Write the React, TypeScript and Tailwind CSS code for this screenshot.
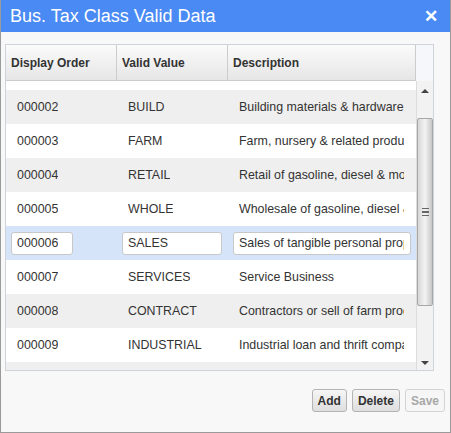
import React from "react";

type Row = { order: string; value: string; desc: string };

const rows: Row[] = [
  { order: "000001", value: "AGRI", desc: "Agriculture" },
  { order: "000002", value: "BUILD", desc: "Building materials & hardware" },
  { order: "000003", value: "FARM", desc: "Farm, nursery & related products" },
  { order: "000004", value: "RETAIL", desc: "Retail of gasoline, diesel & motor fuel" },
  { order: "000005", value: "WHOLE", desc: "Wholesale of gasoline, diesel & motor fuel" },
  { order: "000006", value: "SALES", desc: "Sales of tangible personal property" },
  { order: "000007", value: "SERVICES", desc: "Service Business" },
  { order: "000008", value: "CONTRACT", desc: "Contractors or sell of farm products" },
  { order: "000009", value: "INDUSTRIAL", desc: "Industrial loan and thrift companies" },
  { order: "000010", value: "OTHER", desc: "Other" },
];

const SELECTED = 5;

function Cell({ w, children }: { w: string; children: React.ReactNode }) {
  return (
    <div className={`${w} flex h-full shrink-0 items-center overflow-hidden whitespace-nowrap pl-[11px] pr-[12px]`}>
      <span className="overflow-hidden">{children}</span>
    </div>
  );
}

function InputCell({ w, iw, value }: { w: string; iw: string; value: string }) {
  return (
    <div className={`${w} flex h-full shrink-0 items-center pl-[5px]`}>
      <div
        className={`${iw} flex h-[23px] items-center overflow-hidden whitespace-nowrap rounded-[3px] border border-[#c8c8c8] bg-white pl-[5px] pr-[6px]`}
      >
        <span className="overflow-hidden">{value}</span>
      </div>
    </div>
  );
}

function Scrollbar() {
  return (
    <div className="flex w-[17px] shrink-0 flex-col border-l border-[#dcdcdc] bg-[#f2f2f2]">
      <div className="flex h-[37px] items-start justify-center pt-[8px]">
        <div className="h-0 w-0 border-x-[4px] border-b-[4px] border-x-transparent border-b-[#444]" />
      </div>
      <div className="flex h-[188px] flex-col items-center justify-center rounded-[2px] border border-[#a8a8a8] bg-gradient-to-r from-[#d6d6d6] via-[#f4f4f4] to-[#c8c8c8]">
        <div className="flex flex-col gap-[2px]">
          <div className="h-[1.5px] w-[7px] bg-[#666]" />
          <div className="h-[1.5px] w-[7px] bg-[#666]" />
          <div className="h-[1.5px] w-[7px] bg-[#666]" />
        </div>
      </div>
      <div className="flex flex-1 items-end justify-center pb-[5px]">
        <div className="h-0 w-0 border-x-[4px] border-t-[4px] border-x-transparent border-t-[#444]" />
      </div>
    </div>
  );
}

function Button({ label, disabled }: { label: string; disabled?: boolean }) {
  return (
    <button
      className={
        disabled
          ? "h-[23px] rounded-[3px] border border-[#d4d4d4] bg-[#f6f6f6] px-[5px] text-[12px] font-bold text-[#a8a8a8]"
          : "h-[23px] rounded-[3px] border border-[#b4b4b4] bg-gradient-to-b from-[#f6f6f6] to-[#dedede] px-[5px] text-[12px] font-bold text-[#333]"
      }
    >
      {label}
    </button>
  );
}

export default function App() {
  return (
    <div
      className="flex h-[433px] w-[451px] flex-col border-x border-b border-[#9a9a9a] bg-[#f8f8f8] text-[12px] text-[#333]"
      style={{ fontFamily: '"Liberation Sans", Arial, sans-serif' }}
    >
      <div className="flex h-[32px] shrink-0 items-center justify-between bg-[#4a8af4] pl-[9px] pr-[12px] text-white">
        <span className="text-[18px]">Bus. Tax Class Valid Data</span>
        <span className="text-[17px] font-bold leading-none">✕</span>
      </div>

      <div className="ml-[4px] mt-[12px] flex h-[327px] w-[429px] border border-[#cfd4da] bg-white">
        <div className="flex w-[410px] flex-col">
          <div className="flex h-[36px] shrink-0 border-b border-[#cccccc] bg-gradient-to-b from-[#fbfbfb] to-[#e6e6e6] font-bold">
            <div className="flex w-[111px] items-center border-r border-[#cccccc] pl-[5px]">Display Order</div>
            <div className="flex w-[111px] items-center border-r border-[#cccccc] pl-[5px]">Valid Value</div>
            <div className="flex w-[188px] items-center border-r border-[#cccccc] pl-[5px]">Description</div>
          </div>
          <div className="flex-1 overflow-hidden text-[12.4px]">
            <div className="-mt-[25px]">
              {rows.map((r, i) => (
                <div
                  key={r.order}
                  className={`flex h-[34px] ${
                    i === SELECTED ? "bg-[#d5e4f9]" : i % 2 === 1 ? "bg-[#efefef]" : "bg-white"
                  }`}
                >
                  {i === SELECTED ? (
                    <>
                      <InputCell w="w-[111px]" iw="w-[62px]" value={r.order} />
                      <InputCell w="w-[111px]" iw="w-[100px]" value={r.value} />
                      <InputCell w="w-[188px]" iw="w-[178px]" value={r.desc} />
                    </>
                  ) : (
                    <>
                      <Cell w="w-[111px]">{r.order}</Cell>
                      <Cell w="w-[111px]">{r.value}</Cell>
                      <Cell w="w-[188px]">{r.desc}</Cell>
                    </>
                  )}
                </div>
              ))}
            </div>
          </div>
        </div>
        <div className="flex w-[17px] flex-col bg-[#f5f7fa]">
          <div className="h-[36px] shrink-0" />
          <div className="flex flex-1">
            <Scrollbar />
          </div>
        </div>
      </div>

      <div className="mt-[18px] flex justify-end gap-[5px] pr-[5px]">
        <Button label="Add" />
        <Button label="Delete" />
        <Button label="Save" disabled />
      </div>
    </div>
  );
}
